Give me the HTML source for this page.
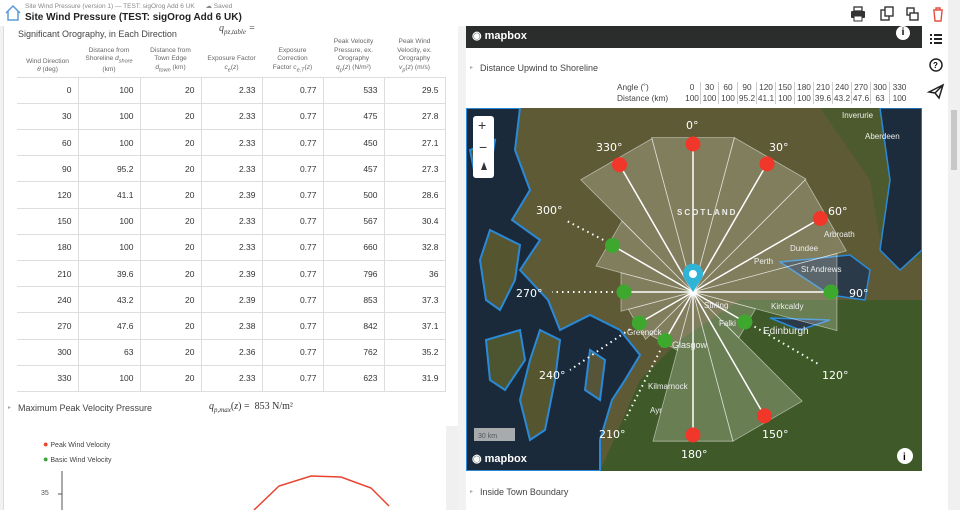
<!DOCTYPE html>
<html><head><meta charset="utf-8"><style>
*{box-sizing:border-box;margin:0;padding:0}
body{width:960px;height:510px;overflow:hidden;background:#f2f2f2;font-family:"Liberation Sans",sans-serif;color:#333;position:relative}
.abs{position:absolute}
#hdr{left:0;top:0;width:948px;height:26px;background:#fff}
#left{left:3px;top:26px;width:455px;height:484px;background:#fff;border-left:1px solid #ddd;overflow:hidden}
table{border-collapse:collapse;position:absolute;left:13px;top:12px;font-size:8.5px}
td{border:1px solid #ddd;height:26.2px;text-align:right;padding-right:6px;font-size:8.5px;color:#333}
th{font-weight:normal;font-size:6.6px;color:#666;text-align:center;vertical-align:bottom;padding-bottom:2px;line-height:8.6px}
tr td:first-child{border-left:none}
#right{left:466px;top:26px;width:456px;height:484px;background:#fff}
#side{left:922px;top:26px;width:26px;height:484px;background:#fff}
#sb{left:948px;top:0;width:12px;height:510px;background:#f0f0f0}
.lbl{font-family:"DejaVu Sans",sans-serif;fill:#fff;font-size:11px}
.city{fill:#eee;font-size:8px;font-family:"Liberation Sans",sans-serif}
</style></head><body>
<div id="hdr" class="abs">
 <svg class="abs" style="left:4px;top:4px" width="18" height="18" viewBox="0 0 18 18"><path d="M2 9 L9 2 L16 9 M4 7 V16 H14 V7" fill="none" stroke="#5b9bd5" stroke-width="1.5"/></svg>
 <div class="abs" style="left:25px;top:2px;font-size:6.5px;color:#888">Site Wind Pressure (version 1) — TEST: sigOrog Add 6 UK &nbsp;&nbsp;&nbsp;&nbsp; ☁ Saved</div>
 <div class="abs" style="left:25px;top:12px;font-size:10px;font-weight:bold;color:#222">Site Wind Pressure (TEST: sigOrog Add 6 UK)</div>
 <svg class="abs" style="left:850px;top:6px" width="100" height="16" viewBox="0 0 100 16">
  <rect x="1" y="5" width="14" height="7" rx="1" fill="#333"/><rect x="4" y="1" width="8" height="4" fill="none" stroke="#333" stroke-width="1.3"/><rect x="4" y="10" width="8" height="5" fill="#fff" stroke="#333"/>
  <rect x="31" y="4" width="8" height="10" fill="none" stroke="#333" stroke-width="1.4"/><rect x="35" y="1" width="8" height="9" fill="#fff" stroke="#333" stroke-width="1.4"/>
  <rect x="57" y="2" width="7" height="7" fill="none" stroke="#333" stroke-width="1.4"/><rect x="60" y="7" width="8" height="7" fill="#fff" stroke="#333" stroke-width="1.4"/>
  <path d="M83 4h10M86 4V2h4v2M84 5l1 10h6l1-10" fill="none" stroke="#e05040" stroke-width="1.4"/>
 </svg>
</div>
<div id="left" class="abs">
 <div class="abs" style="left:14px;top:3px;font-size:9px;color:#444">Significant Orography, in Each Direction</div>
 <div class="abs" style="left:215px;top:-3px;font-family:'Liberation Serif',serif;font-style:italic;font-size:10px;color:#444">q<sub style="font-size:7px">pz,table</sub> =</div>
 <table>
  <tr style="height:37px"><th style="width:61px">Wind Direction<br><i>θ</i> (deg)</th><th style="width:62px">Distance from<br>Shoreline <i>d<sub>shore</sub></i><br>(km)</th><th style="width:61px">Distance from<br>Town Edge<br><i>d<sub>town</sub></i> (km)</th><th style="width:61px">Exposure Factor<br><i>c<sub>e</sub></i>(<i>z</i>)</th><th style="width:61px">Exposure<br>Correction<br>Factor <i>c<sub>e,T</sub></i>(<i>z</i>)</th><th style="width:61px">Peak Velocity<br>Pressure, ex.<br>Orography<br><i>q<sub>p</sub></i>(<i>z</i>) (N/m²)</th><th style="width:61px">Peak Wind<br>Velocity, ex.<br>Orography<br><i>v<sub>p</sub></i>(<i>z</i>) (m/s)</th></tr>
  <tr><td>0</td><td>100</td><td>20</td><td>2.33</td><td>0.77</td><td>533</td><td>29.5</td></tr>
  <tr><td>30</td><td>100</td><td>20</td><td>2.33</td><td>0.77</td><td>475</td><td>27.8</td></tr>
  <tr><td>60</td><td>100</td><td>20</td><td>2.33</td><td>0.77</td><td>450</td><td>27.1</td></tr>
  <tr><td>90</td><td>95.2</td><td>20</td><td>2.33</td><td>0.77</td><td>457</td><td>27.3</td></tr>
  <tr><td>120</td><td>41.1</td><td>20</td><td>2.39</td><td>0.77</td><td>500</td><td>28.6</td></tr>
  <tr><td>150</td><td>100</td><td>20</td><td>2.33</td><td>0.77</td><td>567</td><td>30.4</td></tr>
  <tr><td>180</td><td>100</td><td>20</td><td>2.33</td><td>0.77</td><td>660</td><td>32.8</td></tr>
  <tr><td>210</td><td>39.6</td><td>20</td><td>2.39</td><td>0.77</td><td>796</td><td>36</td></tr>
  <tr><td>240</td><td>43.2</td><td>20</td><td>2.39</td><td>0.77</td><td>853</td><td>37.3</td></tr>
  <tr><td>270</td><td>47.6</td><td>20</td><td>2.38</td><td>0.77</td><td>842</td><td>37.1</td></tr>
  <tr><td>300</td><td>63</td><td>20</td><td>2.36</td><td>0.77</td><td>762</td><td>35.2</td></tr>
  <tr><td>330</td><td>100</td><td>20</td><td>2.33</td><td>0.77</td><td>623</td><td>31.9</td></tr>
 </table>
 <div class="abs" style="left:4px;top:378px;font-size:6px;color:#aaa">▸</div>
 <div class="abs" style="left:14px;top:377px;font-size:9px;color:#444">Maximum Peak Velocity Pressure</div>
 <div class="abs" style="left:205px;top:375px;font-family:'Liberation Serif',serif;font-size:10px;color:#333"><i>q<sub style="font-size:7px">p,max</sub></i>(<i>z</i>) = &nbsp;853 N/m²</div>
 <div class="abs" style="left:442px;top:400px;width:13px;height:84px;background:#f0f0f0"></div>
 <div class="abs" style="left:39px;top:413px;font-size:7px;color:#444"><span style="color:#e8432e;font-size:9px">●</span> Peak Wind Velocity</div>
 <div class="abs" style="left:39px;top:428px;font-size:7px;color:#444"><span style="color:#3aa33a;font-size:9px">●</span> Basic Wind Velocity</div>
 <div class="abs" style="left:37px;top:464px;font-size:7px;color:#555">35</div>
 <svg class="abs" style="left:0;top:440px" width="440" height="44"><path d="M58 5V44M54 28h4" stroke="#555" fill="none"/><path d="M250 44L275 20L307 10L337 11L367 22L385 40" stroke="#e8432e" stroke-width="1.5" fill="none"/></svg>
</div>
<div id="right" class="abs">
 <div class="abs" style="left:0;top:0;width:456px;height:22px;background:#2a2d2c"></div>
 <div class="abs" style="left:6px;top:3px;color:#fff;font-size:11px;font-weight:bold">◉ mapbox</div>
 <div class="abs" style="left:430px;top:0;width:14px;height:14px;border-radius:7px;background:#fff;color:#000;font-size:10px;text-align:center;font-weight:bold;line-height:14px">i</div>
 <div class="abs" style="left:4px;top:38px;font-size:6px;color:#aaa">▸</div>
 <div class="abs" style="left:14px;top:37px;font-size:9px;color:#444">Distance Upwind to Shoreline</div>
 <div class="abs" style="left:151px;top:56px;font-size:8.3px;color:#444;line-height:11px">Angle (˚)<br>Distance (km)</div>
 <div class="abs" style="left:218px;top:56px;font-size:8.3px;color:#444;line-height:11px;display:flex">
  <div style="text-align:center;width:17px;border-right:1px solid #ccc">0<br>100</div><div style="text-align:center;width:18px;border-right:1px solid #ccc">30<br>100</div><div style="text-align:center;width:19px;border-right:1px solid #ccc">60<br>100</div><div style="text-align:center;width:19px;border-right:1px solid #ccc">90<br>95.2</div><div style="text-align:center;width:19px;border-right:1px solid #ccc">120<br>41.1</div><div style="text-align:center;width:19px;border-right:1px solid #ccc">150<br>100</div><div style="text-align:center;width:19px;border-right:1px solid #ccc">180<br>100</div><div style="text-align:center;width:19px;border-right:1px solid #ccc">210<br>39.6</div><div style="text-align:center;width:19px;border-right:1px solid #ccc">240<br>43.2</div><div style="text-align:center;width:19px;border-right:1px solid #ccc">270<br>47.6</div><div style="text-align:center;width:19px;border-right:1px solid #ccc">300<br>63</div><div style="text-align:center;width:19px">330<br>100</div>
 </div>
 <svg class="abs" id="map" style="left:0;top:82px" width="456" height="363" viewBox="466 108 456 363">
  <rect x="466" y="108" width="456" height="363" fill="#5e5a36"/>
  <path d="M740 300 L922 300 L922 471 L600 471 L640 380 L680 340 Z" fill="#3f5a28"/>
  <path d="M820 108 L922 108 L922 260 L880 240 L870 180 Z" fill="#4d5a2e"/>
  <path d="M880 108 L922 108 L922 250 L900 270 L880 250 L890 180 Z" fill="#1c2c3d" stroke="#2a8ad8" stroke-width="1.5"/>
  <path d="M780 262 L850 255 L870 270 L865 300 L830 295 Z" fill="#2a3a48" stroke="#2a8ad8" stroke-width="1.5"/>
  <path d="M770 318 L830 320 L800 330 Z" fill="#2a3a48" stroke="#2a8ad8" stroke-width="1.5"/>
  <path d="M466 108 L520 108 L515 150 L530 190 L512 220 L540 240 L520 270 L548 300 L560 330 L590 315 L620 330 L640 355 L625 380 L612 400 L600 440 L600 471 L466 471 Z" fill="#1b2a3a" stroke="#2a8ad8" stroke-width="2"/>
  <path d="M490 230 L520 245 L515 280 L500 310 L486 300 L480 260 Z" fill="#55552f" stroke="#2a8ad8" stroke-width="2"/>
  <path d="M540 330 L560 340 L555 380 L545 430 L530 440 L520 400 L530 360 Z" fill="#55552f" stroke="#2a8ad8" stroke-width="2"/>
  <path d="M590 350 L605 360 L600 400 L585 390 Z" fill="#56553a" stroke="#2a8ad8" stroke-width="2"/>
  <path d="M486 340 L520 330 L525 360 L505 390 L490 380 Z" fill="#4d5530" stroke="#2a8ad8" stroke-width="2"/>
  <path d="M470 150 L495 140 L490 170 L475 175 Z" fill="#4d5530" stroke="#2a8ad8" stroke-width="2"/>
  <g id="wedges" fill="rgba(235,235,215,0.25)" stroke="rgba(255,255,255,0.5)" stroke-width="0.8"></g>
  <g id="rays" stroke="#fff" stroke-width="1.5"></g>
  <g id="dots" stroke="#fff" stroke-width="2" stroke-dasharray="1.5 4" fill="none">
   <path d="M624 292 L552 292"/><path d="M613 245 L565 220"/><path d="M639 323 L570 370"/><path d="M665 341 L625 420"/><path d="M745 321 L820 365"/>
  </g>
  <g id="mk"></g>
  <text x="677" y="215" class="city" style="font-size:8px;letter-spacing:2px;font-weight:bold">SCOTLAND</text>
  <text x="842" y="118" class="city">Inverurie</text><text x="865" y="139" class="city">Aberdeen</text>
  <text x="824" y="237" class="city">Arbroath</text><text x="790" y="251" class="city">Dundee</text>
  <text x="754" y="264" class="city">Perth</text><text x="801" y="272" class="city">St Andrews</text>
  <text x="704" y="308" class="city">Stirling</text><text x="771" y="309" class="city">Kirkcaldy</text>
  <text x="719" y="326" class="city">Falki</text><text x="763" y="334" class="city" style="font-size:10px">Edinburgh</text>
  <text x="627" y="335" class="city">Greenock</text><text x="672" y="348" class="city" style="font-size:9px">Glasgow</text>
  <text x="648" y="389" class="city">Kilmarnock</text><text x="650" y="413" class="city">Ayr</text>
  <g class="lbl">
   <text x="686" y="129">0°</text><text x="769" y="151">30°</text><text x="828" y="215">60°</text><text x="849" y="297">90°</text>
   <text x="822" y="379">120°</text><text x="762" y="438">150°</text><text x="681" y="458">180°</text><text x="599" y="438">210°</text>
   <text x="539" y="379">240°</text><text x="516" y="297">270°</text><text x="536" y="214">300°</text><text x="596" y="151">330°</text>
  </g>
  <rect x="473" y="116" width="21" height="62" rx="3" fill="#fff"/>
  <text x="478" y="130" font-size="14" fill="#333">+</text><text x="479" y="152" font-size="14" fill="#333">−</text>
  <path d="M484 162 L481 170 H487 Z" fill="#333"/>
  <rect x="474" y="428" width="41" height="13" fill="#ccc" opacity="0.8"/><text x="478" y="438" font-size="7" fill="#555">30 km</text>
  <text x="472" y="462" font-size="11" font-weight="bold" fill="#fff">◉ mapbox</text>
  <circle cx="905" cy="456" r="8" fill="#fff"/><text x="903" y="460" font-size="10" font-weight="bold">i</text>
 </svg>
 <div class="abs" style="left:4px;top:462px;font-size:6px;color:#aaa">▸</div>
 <div class="abs" style="left:14px;top:461px;font-size:9px;color:#444">Inside Town Boundary</div>
</div>
<div id="side" class="abs">
 <svg width="26" height="90" viewBox="0 0 26 90"><g fill="#222"><rect x="8" y="8" width="2" height="2"/><rect x="12" y="8" width="8" height="2"/><rect x="8" y="12" width="2" height="2"/><rect x="12" y="12" width="8" height="2"/><rect x="8" y="16" width="2" height="2"/><rect x="12" y="16" width="8" height="2"/></g>
 <circle cx="14" cy="39" r="6" fill="none" stroke="#222" stroke-width="1.5"/><text x="11" y="42" font-size="8" font-weight="bold">?</text>
 <path d="M7 66 L21 59 L17 72 L13 67 Z M13 67 L21 59" fill="none" stroke="#222" stroke-width="1.5"/></svg>
</div>
<div id="sb" class="abs"><div class="abs" style="left:3px;top:110px;width:6px;height:60px;background:#c8c8c8"></div></div>
<script>
var cx=693,cy=292,R={0:148,30:148,60:147,90:138,120:60,150:143,180:143,210:56,240:62,270:69,300:93,330:147};
var ns="http://www.w3.org/2000/svg",w=document.getElementById('wedges'),r=document.getElementById('rays'),m=document.getElementById('mk');
function pt(a,d){a=a*Math.PI/180;return [cx+d*Math.sin(a),cy-d*Math.cos(a)];}
for(var k in R){var d=+k,rr=R[k]*1.08,p1=pt(d-15,rr),p2=pt(d+15,rr);
var p=document.createElementNS(ns,'path');p.setAttribute('d','M'+cx+' '+cy+'L'+p1+'L'+p2+'Z');w.appendChild(p);
var e=pt(d,R[k]);var l=document.createElementNS(ns,'line');l.setAttribute('x1',cx);l.setAttribute('y1',cy);l.setAttribute('x2',e[0]);l.setAttribute('y2',e[1]);r.appendChild(l);
var c=document.createElementNS(ns,'circle');c.setAttribute('cx',e[0]);c.setAttribute('cy',e[1]);c.setAttribute('r',7.5);c.setAttribute('fill',R[k]>=140?'#f0372a':'#3ea82e');m.appendChild(c);}
var pin=document.createElementNS(ns,'g');pin.innerHTML='<path d="M693 292 L684 278 A10 10 0 1 1 702 278 Z" fill="#2fb4d8"/><circle cx="693" cy="274" r="4" fill="#fff"/>';m.appendChild(pin);
</script>
</body></html>
